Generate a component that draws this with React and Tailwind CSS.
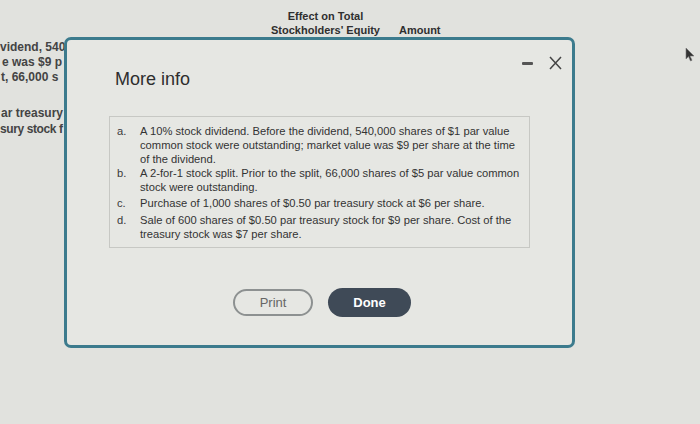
export default function App() {
  const items = [
    { label: "a.", lines: [
      "A 10% stock dividend. Before the dividend, 540,000 shares of $1 par value",
      "common stock were outstanding; market value was $9 per share at the time",
      "of the dividend.",
    ], gap: "mt-0" },
    { label: "b.", lines: [
      "A 2-for-1 stock split. Prior to the split, 66,000 shares of $5 par value common",
      "stock were outstanding.",
    ], gap: "mt-0" },
    { label: "c.", lines: ["Purchase of 1,000 shares of $0.50 par treasury stock at $6 per share."], gap: "mt-[2px]" },
    { label: "d.", lines: [
      "Sale of 600 shares of $0.50 par treasury stock for $9 per share. Cost of the",
      "treasury stock was $7 per share.",
    ], gap: "mt-[3px]" },
  ];

  return (
    <div className="w-[700px] h-[424px] overflow-hidden bg-[#e1e2de] font-['Liberation_Sans',Arial,sans-serif]">
      {/* table header behind the dialog */}
      <div className="flex items-end gap-[19px] pl-[271px] pt-[8px] h-[37px] text-[11px] leading-[14px] font-bold text-[#2f2f2f]">
        <div className="flex flex-col items-center">
          <span>Effect on Total</span>
          <span>Stockholders' Equity</span>
        </div>
        <span>Amount</span>
      </div>

      <div className="flex">
        {/* question text showing at the left of the dialog */}
        <div className="w-[64px] overflow-hidden whitespace-nowrap text-[12px] font-bold text-[#444] pt-[3px]">
          <div className="leading-[15px]">vidend, 540</div>
          <div className="leading-[15px] ml-[2px]">e was $9 p</div>
          <div className="leading-[15px] ml-[1px]">t, 66,000 s</div>
          <div className="leading-[16px] mt-[20px] ml-[1px]">ar treasury</div>
          <div className="leading-[16px] tracking-[-0.4px]">sury stock f</div>
        </div>

        {/* dialog */}
        <div className="w-[511px] h-[311px] border-[3px] border-[#3c7b8d] rounded-[7px] bg-[#e6e7e3] flex flex-col">
          <div className="flex items-start justify-between">
            <div className="ml-[48px] mt-[30px] text-[18px] leading-[18px] text-[#2e2e2e]">More info</div>
            <div className="flex items-center gap-[16px] mt-[16px] mr-[10px] h-[14px]">
              <div className="w-[11px] h-[3px] bg-[#555] rounded-[1px]" />
              <svg width="13" height="14" viewBox="0 0 13 14" fill="none" stroke="#444" strokeWidth="1.5">
                <path d="M1 1 L12 13 M12 1 L1 13" />
              </svg>
            </div>
          </div>

          <div className="mx-[42px] mt-[28px] border border-[#c7c8c4] pt-[7px] pb-[6px] pl-[7px] text-[11.2px] leading-[14px] text-[#333]">
            {items.map((it) => (
              <div key={it.label} className={`flex ${it.gap}`}>
                <span className="w-[23px] shrink-0 text-[#3a3a3a]">{it.label}</span>
                <div className="flex flex-col whitespace-nowrap">
                  {it.lines.map((l) => (
                    <span key={l}>{l}</span>
                  ))}
                </div>
              </div>
            ))}
          </div>

          <div className="flex justify-center items-center gap-[15px] pl-[5px] mt-[40px]">
            <button className="w-[80px] h-[27px] rounded-full border-2 border-[#8d9191] text-[13px] text-[#666]">
              Print
            </button>
            <button className="w-[83px] h-[29px] rounded-full bg-[#3f4a57] text-[13px] font-bold text-white">
              Done
            </button>
          </div>
        </div>

        {/* mouse pointer */}
        <div className="flex-1">
          <svg className="ml-[110px] mt-[10px]" width="11" height="15" viewBox="0 0 11 15">
            <path d="M1 1 L1 12 L3.5 9.5 L5.5 14 L7 13.3 L5 9 L9 9 Z" fill="#333" stroke="#777" strokeWidth="0.6" />
          </svg>
        </div>
      </div>
    </div>
  );
}
